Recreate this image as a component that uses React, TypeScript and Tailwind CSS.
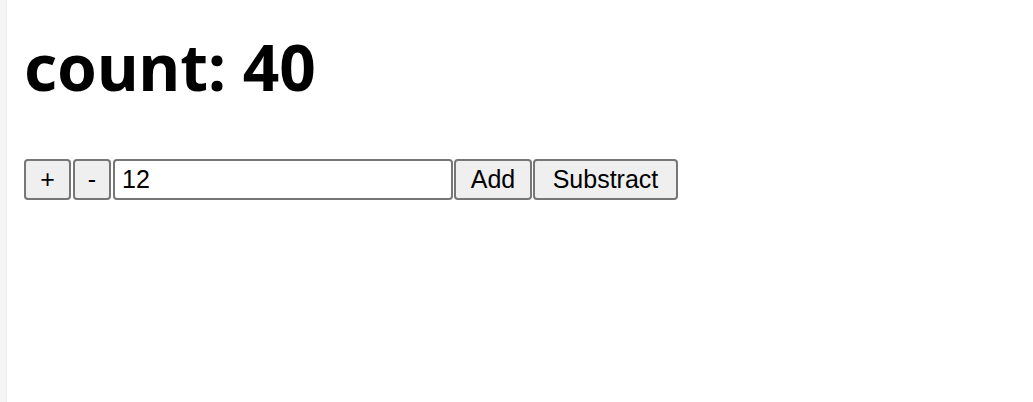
import { useState } from "react";

export default function App() {
  const [count, setCount] = useState(40);
  const [amount, setAmount] = useState("12");

  const btn =
    "h-[41px] rounded-[4px] border-2 border-[#767676] bg-[#efefef] text-[25px] leading-none text-black flex items-center justify-center";

  return (
    <div className="flex min-h-screen bg-white">
      <div className="w-[7px] shrink-0 bg-[#f5f5f5] border-r border-[#ececec]" />
      <div className="flex-1 pl-[16px]">
        <h1
          className="mt-[35px] pl-px text-[64px] font-bold leading-none text-black"
          style={{ fontFamily: '"Noto Sans", "Open Sans", sans-serif' }}
        >
          count: {count}
        </h1>
        <div
          className="mt-[60px] flex items-center gap-[2px] pl-px"
          style={{ fontFamily: '"Liberation Sans", Arial, sans-serif' }}
        >
          <button className={`${btn} w-[47px]`} onClick={() => setCount(count + 1)}>
            +
          </button>
          <button className={`${btn} w-[38px]`} onClick={() => setCount(count - 1)}>
            -
          </button>
          <input
            className="h-[41px] w-[340px] rounded-[4px] border-2 border-[#767676] bg-white px-[7px] text-[25px] text-black outline-none"
            value={amount}
            onChange={(e) => setAmount(e.target.value)}
          />
          <button className={`${btn} -ml-px w-[78px]`} onClick={() => setCount(count + Number(amount))}>
            Add
          </button>
          <button className={`${btn} -ml-px w-[145px]`} onClick={() => setCount(count - Number(amount))}>
            Substract
          </button>
        </div>
      </div>
    </div>
  );
}
